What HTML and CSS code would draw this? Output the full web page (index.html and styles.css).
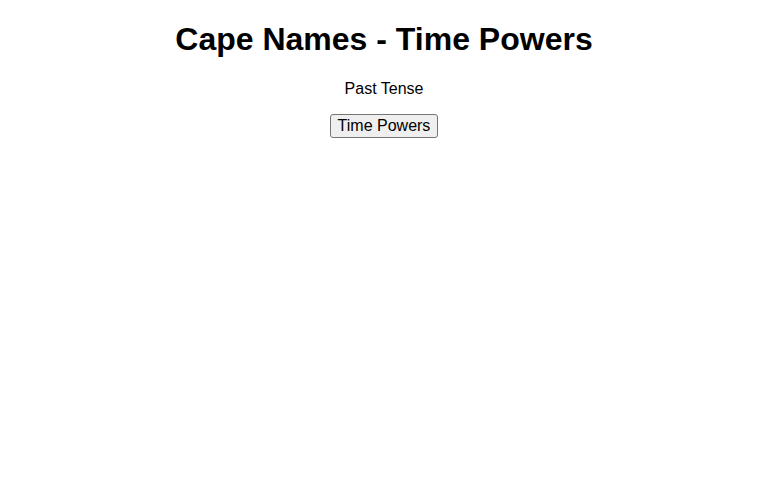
FILE: index.html
```html
<!DOCTYPE html>
<html lang="en">
<head>
  <meta charset="UTF-8">
  <meta name="viewport" content="width=device-width, initial-scale=1.0">
  <title>Cape Names - Time Powers</title>
  <link rel="stylesheet" href="styles.css">
</head>
<body>
  <h1>Cape Names - Time Powers</h1>
  <p id="tense">Past Tense</p>
  <p><button class="btn" id="btnPowers">Time Powers</button></p>
</body>
</html>
```

FILE: styles.css
```css
body {
  font-family: 'Liberation Sans', Arial, sans-serif;
  text-align: center;
  background-color: #fff;
  color: #000;
  margin: 0 8px;
}
.btn {
  font-family: 'Liberation Sans', Arial, sans-serif;
  font-size: 16px;
  padding: 2px 7px;
  color: #000;
  background-color: #efefef;
  border: 1px solid #767676;
  border-radius: 3px;
}
```
